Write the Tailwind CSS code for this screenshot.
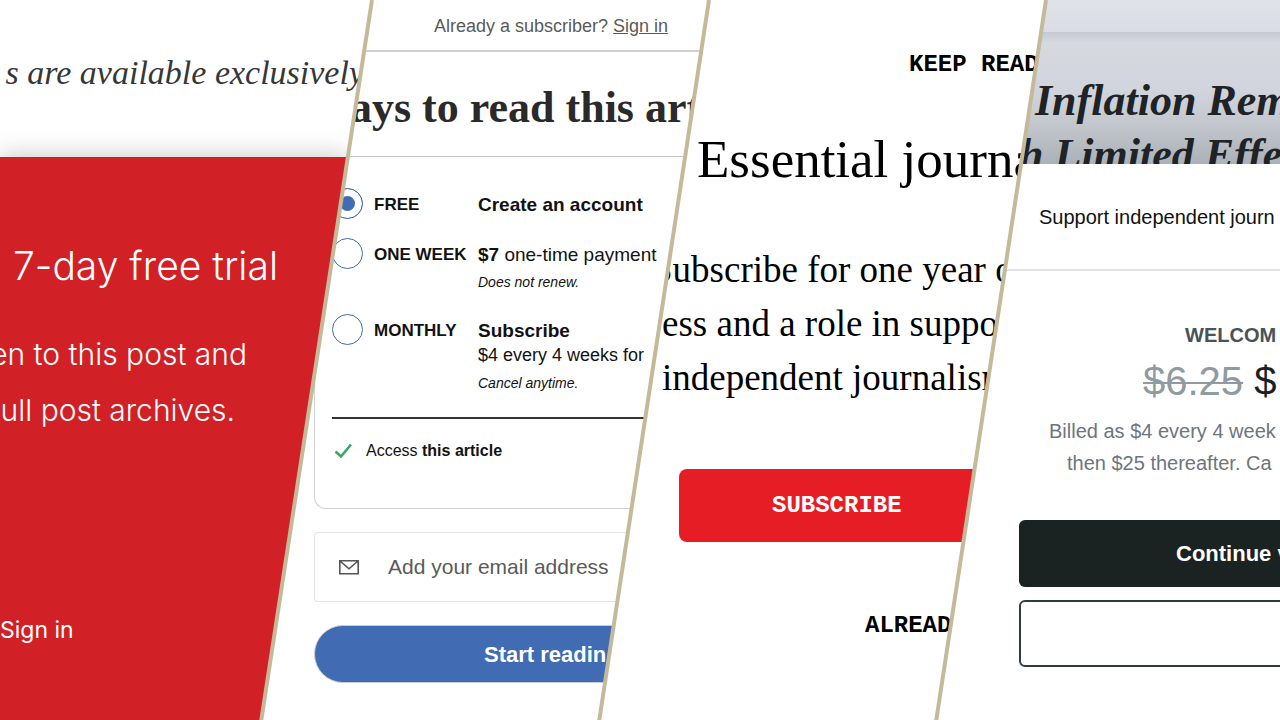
<!DOCTYPE html>
<html lang="en">
<head>
  <meta charset="UTF-8" />
  <meta name="viewport" content="width=device-width, initial-scale=1.0" />
  <title>Paywalls</title>
  <script src="https://cdn.jsdelivr.net/npm/@tailwindcss/browser@4"></script>
</head>
<body class="bg-white font-['Liberation_Sans',sans-serif] text-[#121212]">

  <!-- Four slanted panels, neighbours overlap in the narrow columns -->
  <main class="relative grid min-h-screen grid-cols-[262fr_110fr_228fr_109fr_227fr_109fr_235fr] overflow-hidden whitespace-nowrap">

    <!-- Panel 1: podcast trial -->
    <section class="col-start-1 col-end-3 row-start-1 flex min-w-0 flex-col overflow-hidden bg-white [clip-path:polygon(0_0,100%_0,70.4%_100%,0_100%)]">
      <p class="mt-[53px] flex justify-end pr-2 font-['Liberation_Serif',serif] text-[34px] leading-10 text-[#363737] italic">s are available exclusively</p>
      <div class="mt-16 mr-6 flex flex-1 flex-col bg-[#d12026] font-['Inter',sans-serif] font-light text-white shadow-[0_0_24px_rgba(54,55,55,0.3)]">
        <h2 class="mt-[85px] flex justify-end pr-[70px] text-[39px] leading-12">a 7-day free trial</h2>
        <p class="mt-9 text-[30px] leading-14">
          <span class="flex justify-end pr-[101px]">en to this post and</span>
          <span class="flex justify-end pr-[113px]">ull post archives.</span>
        </p>
        <a href="#" class="mt-44 self-start text-[23px] leading-8 font-normal">Sign in</a>
      </div>
    </section>

    <!-- Panel 2: ways to read -->
    <section class="col-start-2 col-end-5 row-start-1 min-w-0 overflow-hidden bg-white [clip-path:polygon(24.6%_0,100%_0,75.6%_100%,0_100%)]">
      <p class="h-[52px] border-b-2 border-[#d0d0d0] pl-[172px] text-lg leading-[52px] text-[#5a5a5a]">Already a subscriber? <a href="#" class="underline">Sign in</a></p>
      <h2 class="h-[105px] border-b border-[#c8c8c8] pl-[88px] font-['Liberation_Serif',serif] text-[44px] leading-[112px] font-bold text-[#2a2a2a]">ays to read this art</h2>
      <form>
        <div class="ml-[52px] rounded-bl-xl border-b border-l border-[#d0d0d0] pt-[31px] pb-[45px] pl-[17px]">
          <fieldset class="flex flex-col gap-[19px] text-[19px] leading-[25px]">
            <label class="flex items-start">
              <input type="radio" name="plan" checked class="size-[31px] shrink-0 appearance-none rounded-full border border-[#416bb2] checked:bg-[#416bb2] checked:shadow-[inset_0_0_0_7px_white]" />
              <b class="ml-[11px] w-[104px] shrink-0 pt-1 text-[17px]">FREE</b>
              <b class="pt-1">Create an account</b>
            </label>
            <label class="flex items-start">
              <input type="radio" name="plan" class="size-[31px] shrink-0 appearance-none rounded-full border border-[#416bb2] checked:bg-[#416bb2] checked:shadow-[inset_0_0_0_7px_white]" />
              <b class="ml-[11px] w-[104px] shrink-0 pt-1 text-[17px]">ONE WEEK</b>
              <span class="pt-1"><b>$7</b> one-time payment<i class="mt-[3px] block text-[14px]">Does not renew.</i></span>
            </label>
            <label class="flex items-start">
              <input type="radio" name="plan" class="size-[31px] shrink-0 appearance-none rounded-full border border-[#416bb2] checked:bg-[#416bb2] checked:shadow-[inset_0_0_0_7px_white]" />
              <b class="ml-[11px] w-[104px] shrink-0 pt-1 text-[17px]">MONTHLY</b>
              <span class="pt-1"><b class="block">Subscribe</b><span class="block text-lg leading-[25px]">$4 every 4 weeks for</span><i class="mt-[3px] block text-[14px]">Cancel anytime.</i></span>
            </label>
          </fieldset>
          <p class="mt-[21px] flex items-center border-t-2 border-[#333] pt-5 text-base leading-6">
            <svg class="mr-3 ml-[2px] size-5" viewBox="0 0 20 20" fill="none" stroke="#37a862" stroke-width="2.6"><path d="M1.500 10.500 7 15.500 17 3.500" /></svg>
            <span>Access <b>this article</b></span>
          </p>
        </div>
        <label class="mt-[23px] ml-[52px] flex h-[70px] items-center rounded-l-sm border border-r-0 border-[#e4e4e4] pl-6">
          <svg class="mr-[29px] h-[15px] w-5 shrink-0" viewBox="0 0 20 15" fill="none" stroke="#555" stroke-width="1.6"><path d="M.8.8H19.2V13.7H.8ZM1 1 10 8.800 19 1" /></svg>
          <input type="email" aria-label="Email address" placeholder="Add your email address" class="min-w-0 flex-1 text-[21px] leading-7 outline-none placeholder:text-[#5a5a5a]" />
        </label>
        <button type="button" class="mt-[23px] ml-[52px] block h-[58px] w-full rounded-l-full border border-[#c9cbd0] bg-[#416bb2] pl-[169px] text-left text-[22px] font-bold text-white">Start readin</button>
      </form>
    </section>

    <!-- Panel 3: essential journalism -->
    <section class="col-start-4 col-end-7 row-start-1 min-w-0 overflow-hidden bg-white text-black [clip-path:polygon(24.5%_0,100%_0,75.5%_100%,0_100%)]">
      <p class="mt-[49px] pl-[309px] font-['Liberation_Mono',monospace] text-2xl leading-8 font-bold">KEEP READ</p>
      <h2 class="mt-[43px] pl-[97px] font-['Liberation_Serif',serif] text-[53px] leading-[70px]">Essential journa</h2>
      <p class="mt-[49px] pl-[62px] font-['Liberation_Serif',serif] text-[37px] leading-[54px]">
        <span class="-ml-[10px] block">Subscribe for one year o</span>
        <span class="block">ess and a role in suppo</span>
        <span class="block">independent journalism</span>
      </p>
      <button type="button" class="mt-16 ml-[79px] block h-[73px] w-full rounded-lg bg-[#e71d25] pl-[93px] text-left font-['Liberation_Mono',monospace] text-2xl font-bold text-white">SUBSCRIBE</button>
      <p class="mt-[68px] pl-[265px] font-['Liberation_Mono',monospace] text-2xl leading-8 font-bold">ALREAD</p>
    </section>

    <!-- Panel 4: welcome offer -->
    <section class="col-start-6 col-end-8 row-start-1 min-w-0 overflow-hidden bg-white [clip-path:polygon(31.7%_0,100%_0,100%_100%,0_100%)]">
      <div class="h-8 bg-linear-to-b from-[#dfe2e7] to-[#dadde6]"></div>
      <h2 class="h-[132px] overflow-hidden bg-[linear-gradient(#c5c8d2,#d6d9de_8%,#d1d4dd_45%,#c3c7cd_70%,#abb1b9)] pt-[42px] pl-[99px] font-['Liberation_Serif',serif] text-[44px] leading-[54px] font-bold text-[#202325] italic">
        <span class="block">Inflation Rem</span>
        <span class="-ml-4 block">h Limited Effe</span>
      </h2>
      <p class="h-[107px] border-b-2 border-[#dfe3e8] pl-[103px] text-xl leading-[106px]">Support independent journ</p>
      <p class="mt-[50px] pl-[249px] text-xl leading-7 font-bold text-[#485257]">WELCOM</p>
      <p class="mt-2 pl-[207px] text-[40px] leading-12 text-[#1b2122]"><s class="text-[#909aa1] decoration-2">$6.25</s> $</p>
      <p class="mt-[10px] pl-[113px] text-xl leading-8 text-[#6b767e]">
        <span class="block">Billed as $4 every 4 week</span>
        <span class="ml-[18px] block">then $25 thereafter. Ca</span>
      </p>
      <button type="button" class="mt-[41px] ml-[83px] block h-[67px] w-full rounded-md bg-[#1b2222] pl-[157px] text-left text-[22px] font-bold text-white">Continue v</button>
      <button type="button" aria-label="More options" class="mt-[13px] ml-[83px] block h-[67px] w-full rounded-md border-2 border-[#333b40] bg-white"></button>
    </section>

    <!-- Dividers -->
    <svg class="pointer-events-none absolute inset-0 size-full" viewBox="0 0 1280 720" preserveAspectRatio="none" stroke="#c4ba9a" stroke-width="4">
      <path d="M372 0 261 722M709 0 599 722M1046 0 936 722" fill="none" />
    </svg>
  </main>
</body>
</html>
